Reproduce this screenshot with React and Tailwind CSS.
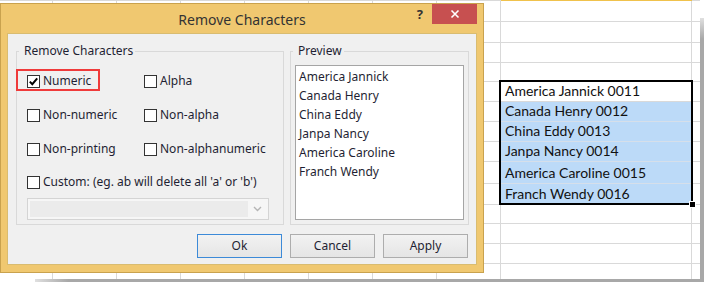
import React from 'react';

// column / row sizes of the worksheet behind the dialog
const COLS = ['w-[53px]', 'w-[64px]', 'w-[64px]', 'w-[64px]', 'w-[64px]', 'w-[64px]', 'w-[64px]', 'w-[64px]', 'w-[191px]', 'w-[8px]'];
const ROWS = ['h-[21px]', 'h-[21px]', 'h-[20px]', 'h-[19px]', 'h-[20px]', 'h-[20px]', 'h-[20px]', 'h-[20px]', 'h-[22px]', 'h-[21px]', 'h-[19px]', 'h-[20px]', 'h-[20px]', 'h-[15px]'];

const CELLS = {
  4: 'America Jannick 0011',
  5: 'Canada Henry 0012',
  6: 'China Eddy 0013',
  7: 'Janpa Nancy 0014',
  8: 'America Caroline 0015',
  9: 'Franch Wendy 0016',
};

const PREVIEW = ['America Jannick', 'Canada Henry', 'China Eddy', 'Janpa Nancy', 'America Caroline', 'Franch Wendy'];

const Sheet = () => (
  <div className="relative w-[700px] h-[279px] bg-white" style={{ fontFamily: 'Lato, "Open Sans", sans-serif' }}>
    <div className="flex h-[1px]">
      {COLS.map((w, c) => (
        <div key={c} className={`${w} ${c === 8 ? 'bg-[#f0c24c]' : 'bg-[#d9d9d9]'}`} />
      ))}
    </div>
    {ROWS.map((h, r) => (
      <div key={r} className={`flex ${h}`}>
        {COLS.map((w, c) => {
          const text = c === 8 ? CELLS[r] : null;
          const selected = c === 8 && r >= 5 && r <= 9;
          const last = r === ROWS.length - 1;
          return (
            <div
              key={c}
              className={`${w} shrink-0 flex items-end pl-[4px] pb-[1px] text-[14px] leading-[18px] text-[#111] whitespace-nowrap ${c < 9 ? 'border-r' : ''} ${last ? '' : 'border-b'} ${selected ? 'bg-[#bcdaf8] border-[#d6dfea]' : 'border-[#d9d9d9]'}`}
            >
              {text}
            </div>
          );
        })}
      </div>
    ))}
    {/* selection frame */}
    <div className="absolute left-[499px] top-[80px] w-[194px] h-[125px] border-2 border-black">
      <div className="absolute right-[-5px] bottom-[-5px] w-[7px] h-[7px] bg-black border border-white" />
    </div>
  </div>
);

const Check = ({ checked, label }) => (
  <div className="flex items-center gap-[3px]">
    <div className="w-[13px] h-[13px] border border-[#333] bg-white flex items-center justify-center">
      {checked && (
        <svg width="11" height="11" viewBox="0 0 11 11">
          <path d="M1.8 5.6 L4.3 8.2 L9.2 2.4" fill="none" stroke="#000" strokeWidth="2" />
        </svg>
      )}
    </div>
    <span>{label}</span>
  </div>
);

const Button = ({ children, primary }) => (
  <button
    className={`w-[85px] h-[24px] border bg-gradient-to-b from-[#f2f2f2] to-[#e5e5e5] text-[12px] ${primary ? 'border-[#3c8ad8]' : 'border-[#adadad]'}`}
  >
    {children}
  </button>
);

const Dialog = () => (
  <div
    className="absolute left-0 top-[3px] w-[484px] h-[270px] bg-[#f0c870] border border-[#c9a24e] flex flex-col px-[6px] pb-[7px] text-[#1f1f33]"
    style={{ fontFamily: '"Noto Sans", "Open Sans", sans-serif' }}
  >
    <div className="h-[29px] grid grid-cols-[1fr_auto_1fr]">
      <div />
      <div className="text-[14px] text-[#333] leading-[29px] pt-[1px]">Remove Characters</div>
      <div className="flex justify-end items-start">
        <span className="mt-[1px] mr-[9px] text-[13px] font-bold text-[#333] leading-[18px]">?</span>
        <div className="w-[45px] h-[20px] bg-[#c75050] flex items-center justify-center">
          <svg width="10" height="10" viewBox="0 0 10 10">
            <path d="M1.5 1.5 L8.5 8.5 M8.5 1.5 L1.5 8.5" stroke="#fff" strokeWidth="1.6" />
          </svg>
        </div>
      </div>
    </div>

    <div className="flex-1 bg-[#f0f0f0] border border-[#d9bc70] text-[12px] leading-[16px]">
      <div className="flex gap-[6px] ml-[8px] mt-[9px]">
        <fieldset className="w-[268px] h-[182px] border border-[#d9d9d9]">
          <legend className="ml-[2px] pl-[5px] pr-[2px]">Remove Characters</legend>
          <div className="pl-[10px] pt-[5px]">
            <div className="grid grid-cols-[117px_1fr]">
              <div className="h-[34px] flex items-center"><Check checked label="Numeric" /></div>
              <div className="h-[34px] flex items-center"><Check label="Alpha" /></div>
              <div className="h-[34px] flex items-center"><Check label="Non-numeric" /></div>
              <div className="h-[34px] flex items-center"><Check label="Non-alpha" /></div>
              <div className="h-[34px] flex items-center"><Check label="Non-printing" /></div>
              <div className="h-[34px] flex items-center"><Check label="Non-alphanumeric" /></div>
            </div>
            <div className="h-[32px] flex items-center"><Check label="Custom: (eg. ab will delete all 'a' or 'b')" /></div>
            <div className="w-[242px] h-[22px] border border-[#d4d4d4] bg-[#f6f6f6] flex p-[2px]">
              <div className="flex-1 bg-[#ebebeb]" />
              <div className="w-[18px] flex items-center justify-center">
                <svg width="9" height="6" viewBox="0 0 9 6">
                  <path d="M1 1 L4.5 4.5 L8 1" fill="none" stroke="#b5b5b5" strokeWidth="1.4" />
                </svg>
              </div>
            </div>
          </div>
        </fieldset>

        <fieldset className="w-[179px] h-[182px] border border-[#d9d9d9]">
          <legend className="ml-[2px] pl-[5px] pr-[2px]">Preview</legend>
          <div className="ml-[4px] mt-[6px] w-[169px] h-[155px] bg-white border border-[#a5a5a5] pt-[1px] pl-[3px]">
            {PREVIEW.map((p) => (
              <div key={p} className="h-[19px] leading-[19px]">{p}</div>
            ))}
          </div>
        </fieldset>
      </div>

      <div className="flex justify-end gap-[8px] mt-[9px] pr-[8px]">
        <Button primary>Ok</Button>
        <Button>Cancel</Button>
        <Button>Apply</Button>
      </div>
    </div>

    {/* annotation around the ticked option */}
    <div className="absolute left-[15px] top-[65px] w-[84px] h-[22px] border-2 border-[#ef3b3b]" />
  </div>
);

export default function App() {
  return (
    <div className="relative w-[704px] h-[282px] bg-white overflow-hidden">
      <div className="flex">
        <Sheet />
        <div className="w-[4px] pt-[18px]">
          <div className="h-[261px] bg-gradient-to-b from-[#e0e0e0] to-[#a8a8a8] to-[8%]" />
        </div>
      </div>
      <div className="pl-[35px]">
        <div className="h-[3px] bg-gradient-to-r from-[#e0e0e0] to-[#a8a8a8] to-[5%]" />
      </div>
      <Dialog />
    </div>
  );
}
